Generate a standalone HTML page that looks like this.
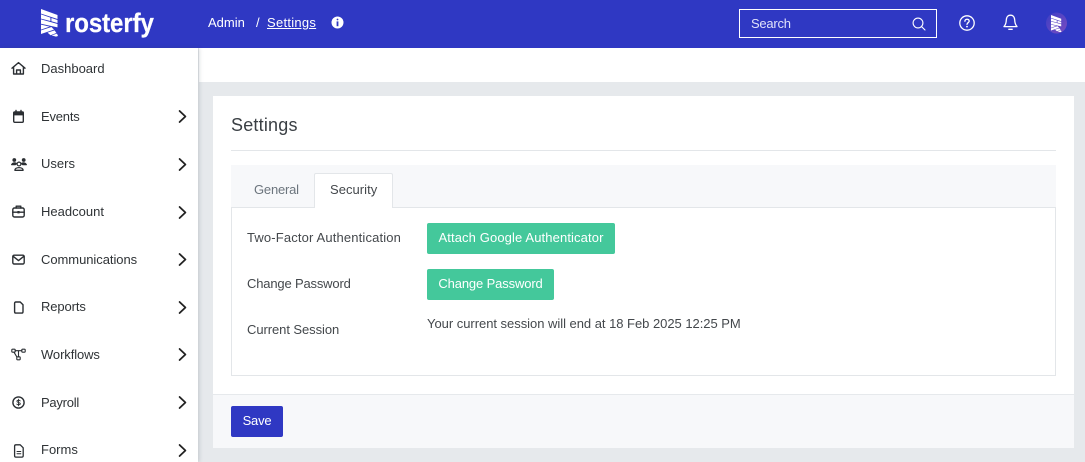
<!DOCTYPE html>
<html lang="en">
<head>
<meta charset="utf-8">
<title>Settings</title>
<style>
*{box-sizing:border-box}
html,body{margin:0;padding:0}
body{width:1085px;height:462px;overflow:hidden;position:relative;background:#e6e9ec;font-family:"Liberation Sans",sans-serif;font-size:13px;color:#44484c}
.a{position:absolute;white-space:nowrap;line-height:16px}
header{position:absolute;left:0;top:0;width:1085px;height:48px;background:#2f38c3}
.strip{position:absolute;left:199px;top:48px;width:886px;height:34px;background:#fff}
aside{position:absolute;left:0;top:48px;width:198px;height:414px;background:#fff;box-shadow:1px 0 4px rgba(60,70,80,.22)}
.side{color:#2f3336}
.card{position:absolute;left:213px;top:96px;width:861px;height:352px;background:#fff}
.foot{position:absolute;left:213px;top:394px;width:861px;height:54px;background:#f7f8fa;border-top:1px solid #e6e9ec}
.tabs{position:absolute;left:231px;top:165px;width:825px;height:43px;background:#f7f8fa}
.panel{position:absolute;left:231px;top:207px;width:825px;height:169px;background:#fff;border:1px solid #e3e6e9}
.tab{position:absolute;left:314px;top:173px;width:79px;height:35px;background:#fff;border:1px solid #e3e6e9;border-bottom:0;border-radius:2px 2px 0 0}
.btn{position:absolute;background:#44c89b;border-radius:2px;color:#fff;line-height:30px;text-align:center}
svg{position:absolute;display:block;overflow:visible}
.i{fill:none;stroke:#2b2f33;stroke-width:1.4;stroke-linecap:round;stroke-linejoin:round}
.w{fill:none;stroke:#fff;stroke-width:1.3;stroke-linecap:round;stroke-linejoin:round}
.c{left:178px;width:9px;height:13px}
.c path{fill:none;stroke:#222;stroke-width:1.8;stroke-linecap:round;stroke-linejoin:round}
</style>
</head>
<body>
<header></header>
<div class="strip"></div>
<aside></aside>

<!-- logo -->
<svg style="left:41px;top:9px" width="17" height="27" viewBox="0 0 17 27" fill="#fff">
<polygon points="0,0 16.5,6 16.5,10 0,4.6"/>
<polygon points="0,5.4 9.4,8.6 9.4,12 0,9.6"/>
<polygon points="10.4,9 16.5,11 16.5,14 10.4,12.3"/>
<polygon points="0,10.4 16.5,15 16.5,18.4 0,14.8"/>
<polygon points="0,15.6 8.6,17.6 0,20.6"/>
<polygon points="0,21.4 10.4,18 13,20.6 0,25"/>
<polygon points="6.5,23.6 13.6,21.4 15.4,24 9.6,26.2"/>
<polygon points="10.6,26.4 16,24.6 17,27 15,27.6"/>
</svg>
<div class="a" style="left:65px;top:9px;font-size:27px;line-height:28px;font-weight:700;color:#fff;letter-spacing:-.1px;transform:scaleX(.89);transform-origin:left top;-webkit-text-stroke:.25px #fff">rosterfy</div>

<div class="a" style="left:208px;top:15px;color:#fff">Admin</div>
<div class="a" style="left:256px;top:15px;color:#fff">/</div>
<div class="a" style="left:267px;top:15px;color:#fff;text-decoration:underline;letter-spacing:.27px">Settings</div>
<svg style="left:331px;top:16px" width="13" height="13" viewBox="0 0 13 13"><circle cx="6.5" cy="6.5" r="6" fill="#fff"/><rect x="5.6" y="2.6" width="1.8" height="1.8" rx=".9" fill="#2f38c3"/><rect x="5.6" y="5.4" width="1.8" height="4.8" fill="#2f38c3"/></svg>

<div style="position:absolute;left:739px;top:9px;width:198px;height:29px;border:1px solid #fff"></div>
<div class="a" style="left:751px;top:16px;color:#dfe1fa;letter-spacing:-.25px">Search</div>
<svg style="left:912px;top:17px" width="14" height="14" viewBox="0 0 14 14"><circle cx="6" cy="6" r="4.9" class="w" style="stroke-width:1.1"/><path d="M9.6 9.6L13 13" class="w" style="stroke-width:1.1"/></svg>

<svg style="left:959px;top:15px" width="16" height="16" viewBox="0 0 16 16"><circle cx="8" cy="8" r="7.2" class="w"/><path d="M5.9 6.2C5.9 3.6 10.2 3.6 10.2 6.1C10.2 7.7 8 7.7 8 9.4" class="w"/><circle cx="8" cy="11.6" r=".9" fill="#fff"/></svg>
<svg style="left:1003px;top:14px" width="15" height="17" viewBox="0 0 15 17"><path d="M7.5 1.2C4.6 1.2 3.4 3.5 3.3 6C3.2 9 2.4 11 1 12.6H14C12.6 11 11.8 9 11.7 6C11.6 3.5 10.4 1.2 7.5 1.2Z" class="w"/><path d="M5.8 15.3H9.2" class="w"/></svg>
<svg style="left:1046px;top:12px" width="21" height="22" viewBox="0 0 21 22">
<defs><linearGradient id="g" x1="0" y1="0" x2="1" y2="1"><stop offset="0" stop-color="#3a3ec6"/><stop offset="1" stop-color="#7a4cc0"/></linearGradient></defs>
<circle cx="10.5" cy="11" r="10.5" fill="url(#g)"/>
<g fill="#fff" transform="translate(5 3) scale(.62)"><polygon points="0,0 16.5,6 16.5,10 0,4.6"/><polygon points="0,5.4 9.4,8.6 9.4,12 0,9.6"/><polygon points="10.4,9 16.5,11 16.5,14 10.4,12.3"/><polygon points="0,10.4 16.5,15 16.5,18.4 0,14.8"/><polygon points="0,15.6 8.6,17.6 0,20.6"/><polygon points="0,21.4 10.4,18 13,20.6 0,25"/><polygon points="6.5,23.6 13.6,21.4 15.4,24 9.6,26.2"/><polygon points="10.6,26.4 16,24.6 17,27 15,27.6"/></g>
</svg>

<!-- sidebar -->
<svg style="left:11px;top:61px" width="15" height="15" viewBox="0 0 15 15"><path d="M1 7.2L7.5 1.6L14 7.2M2.6 6.2V13H12.4V6.2M5.6 13V9H9.4V13" class="i"/></svg>
<div class="a side" style="left:41px;top:61px">Dashboard</div>

<svg style="left:13px;top:110px" width="11" height="13" viewBox="0 0 11 13"><rect x=".7" y="2" width="9.6" height="10.3" rx="1" class="i"/><path d="M.7 2.2H10.3V5H.7Z" fill="#2b2f33" stroke="#2b2f33" stroke-width=".8"/><path d="M3 .5V2M8 .5V2" class="i"/></svg>
<div class="a side" style="left:41px;top:109px;letter-spacing:-.2px">Events</div>

<svg style="left:11px;top:158px" width="16" height="13" viewBox="0 0 16 13"><circle cx="3.3" cy="2" r="1.9" fill="#2b2f33"/><circle cx="12.7" cy="2" r="1.9" fill="#2b2f33"/><path d="M.3 7C.3 4.2 5.3 3.8 6 5.6L4.6 7ZM15.7 7C15.7 4.2 10.7 3.8 10 5.6L11.4 7Z" fill="#2b2f33" stroke="#2b2f33" stroke-width=".5" stroke-linejoin="round"/><circle cx="8" cy="6" r="1.9" fill="none" stroke="#2b2f33" stroke-width="1.2"/><path d="M3.9 12.3C3.9 8.7 12.1 8.7 12.1 12.3Z" fill="none" stroke="#2b2f33" stroke-width="1.3" stroke-linejoin="round"/></svg>
<div class="a side" style="left:41px;top:156px">Users</div>

<svg style="left:12px;top:205px" width="13" height="13" viewBox="0 0 13 13"><rect x=".8" y="3" width="11.4" height="9" rx="1.6" class="i"/><path d="M4.2 3V1.2H8.8V3M.8 7.2H12.2" class="i"/><rect x="5.4" y="6" width="2.2" height="2.4" fill="#2b2f33"/></svg>
<div class="a side" style="left:41px;top:204px;letter-spacing:.02px">Headcount</div>

<svg style="left:12px;top:254px" width="13" height="11" viewBox="0 0 13 11"><rect x=".8" y="1.2" width="11.4" height="8.8" rx="1.4" class="i"/><path d="M1 2.2L6.5 6.6L12 2.2" class="i"/></svg>
<div class="a side" style="left:41px;top:252px;letter-spacing:-.05px">Communications</div>

<svg style="left:14px;top:301px" width="10" height="13" viewBox="0 0 10 13"><path d="M1.9 1H6.2L9 3.8V10.7C9 11.5 8.4 12.1 7.6 12.1H1.9C1.1 12.1 .6 11.5 .6 10.7V2.4C.6 1.6 1.1 1 1.9 1Z" class="i"/></svg>
<div class="a side" style="left:41px;top:299px;letter-spacing:-.1px">Reports</div>

<svg style="left:11px;top:348px" width="15" height="13" viewBox="0 0 15 13"><rect x=".8" y="1.2" width="3.4" height="3" rx=".8" class="i" style="stroke-width:1.1"/><rect x="10.8" y="1.2" width="3.4" height="3" rx=".8" class="i" style="stroke-width:1.1"/><rect x="5.8" y="8.8" width="3.4" height="3" rx=".8" class="i" style="stroke-width:1.1"/><path d="M4.2 2.7H10.8M7.5 2.7V8.8M3 4.2L5.8 8.8" class="i" style="stroke-width:1.1"/></svg>
<div class="a side" style="left:41px;top:347px;letter-spacing:-.1px">Workflows</div>

<svg style="left:12px;top:396px" width="13" height="13" viewBox="0 0 13 13"><circle cx="6.5" cy="6.5" r="5.6" class="i"/><path d="M8.2 4.9C7.8 3.9 4.9 3.8 4.9 5.3C4.9 7 8.3 6.1 8.3 7.8C8.3 9.2 5.2 9.1 4.8 8.1M6.5 3.2V9.8" class="i" style="stroke-width:.9"/></svg>
<div class="a side" style="left:41px;top:395px;letter-spacing:-.25px">Payroll</div>

<svg style="left:14px;top:444px" width="10" height="14" viewBox="0 0 10 14"><path d="M1.9 .8H6.2L9.2 3.8V11.7C9.2 12.5 8.6 13.1 7.8 13.1H1.9C1.1 13.1 .6 12.5 .6 11.7V2.2C.6 1.4 1.1 .8 1.9 .8Z" class="i" style="stroke-width:1.3"/><path d="M3 7.5H6.8M3 9.8H6.8" class="i" style="stroke-width:1"/></svg>
<div class="a side" style="left:41px;top:442px">Forms</div>

<svg class="c" style="top:110px" viewBox="0 0 9 13"><path d="M1.6 1L7.4 6.5L1.6 12"/></svg>
<svg class="c" style="top:158px" viewBox="0 0 9 13"><path d="M1.6 1L7.4 6.5L1.6 12"/></svg>
<svg class="c" style="top:206px" viewBox="0 0 9 13"><path d="M1.6 1L7.4 6.5L1.6 12"/></svg>
<svg class="c" style="top:253px" viewBox="0 0 9 13"><path d="M1.6 1L7.4 6.5L1.6 12"/></svg>
<svg class="c" style="top:301px" viewBox="0 0 9 13"><path d="M1.6 1L7.4 6.5L1.6 12"/></svg>
<svg class="c" style="top:348px" viewBox="0 0 9 13"><path d="M1.6 1L7.4 6.5L1.6 12"/></svg>
<svg class="c" style="top:396px" viewBox="0 0 9 13"><path d="M1.6 1L7.4 6.5L1.6 12"/></svg>
<svg class="c" style="top:444px" viewBox="0 0 9 13"><path d="M1.6 1L7.4 6.5L1.6 12"/></svg>

<!-- card -->
<div class="card"></div>
<div class="a" style="left:231px;top:114px;font-size:18px;line-height:22px;color:#3a3f44;letter-spacing:.2px">Settings</div>
<div style="position:absolute;left:231px;top:150px;width:825px;height:1px;background:#e3e6e9"></div>
<div class="tabs"></div>
<div class="panel"></div>
<div class="tab"></div>
<div class="a" style="left:254px;top:182px;color:#6c757d;letter-spacing:-.2px">General</div>
<div class="a" style="left:330px;top:182px;color:#44484c;letter-spacing:.04px">Security</div>

<div class="a" style="left:247px;top:230px;letter-spacing:.15px">Two-Factor Authentication</div>
<div class="btn" style="left:427px;top:223px;width:188px;height:31px;letter-spacing:.12px">Attach Google Authenticator</div>
<div class="a" style="left:247px;top:276px;letter-spacing:-.17px">Change Password</div>
<div class="btn" style="left:427px;top:269px;width:127px;height:31px;letter-spacing:-.13px">Change Password</div>
<div class="a" style="left:247px;top:322px;letter-spacing:-.07px">Current Session</div>
<div class="a" style="left:427px;top:316px;letter-spacing:-.03px">Your current session will end at 18 Feb 2025 12:25 PM</div>

<div class="foot"></div>
<div style="position:absolute;left:231px;top:406px;width:52px;height:31px;background:#2f38c3;border-radius:2px;color:#fff;line-height:30px;text-align:center;letter-spacing:-.2px">Save</div>
</body>
</html>
